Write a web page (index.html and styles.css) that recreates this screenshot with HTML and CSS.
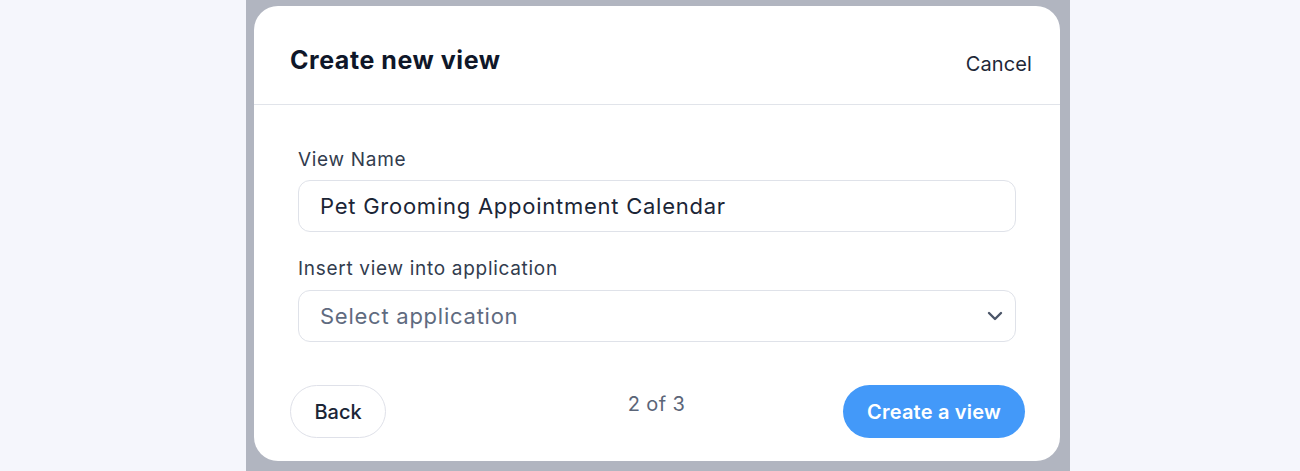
FILE: index.html
```html
<!DOCTYPE html>
<html>
<head>
<meta charset="utf-8">
<link rel="stylesheet" href="styles.css">
</head>
<body>
<div class="backdrop">
  <div class="modal">
    <div class="modal-header">
      <h1 class="title">Create new view</h1>
      <button class="cancel">Cancel</button>
    </div>
    <div class="modal-body">
      <label class="label">View Name</label>
      <div class="field">Pet Grooming Appointment Calendar</div>
      <label class="label label-second">Insert view into application</label>
      <div class="field select">
        <span class="placeholder">Select application</span>
        <svg class="chevron" width="16" height="10" viewBox="0 0 16 10"><path d="M2 2l6 6 6-6" fill="none" stroke="#4b5568" stroke-width="2.4" stroke-linecap="round" stroke-linejoin="round"/></svg>
      </div>
    </div>
    <div class="modal-footer">
      <button class="btn-back">Back</button>
      <span class="step">2 of 3</span>
      <button class="btn-create">Create a view</button>
    </div>
  </div>
</div>
</body>
</html>
```

FILE: styles.css
```css
* { box-sizing: border-box; }
html, body { margin: 0; height: 100%; }
body {
  background: #f5f6fc;
  font-family: Inter, "Noto Sans", sans-serif;
  display: flex;
}
.backdrop {
  margin-left: 246px;
  width: 824px;
  height: 471px;
  background: #b1b5c0;
  padding: 6px 10px 10px 8px;
}
.modal {
  background: #fff;
  border-radius: 24px;
  height: 455px;
  display: flex;
  flex-direction: column;
}
.modal-header {
  height: 99px;
  border-bottom: 1px solid #e1e4ea;
  display: flex;
  align-items: flex-start;
  justify-content: space-between;
  padding: 0 28px 0 36px;
}
.title {
  margin: 38px 0 0;
  font-size: 25px;
  font-weight: 700;
  letter-spacing: 0.55px;
  color: #0f1729;
  line-height: 32px;
}
.cancel {
  margin-top: 44px;
  background: none;
  border: 0;
  padding: 0;
  font-family: inherit;
  font-size: 20px;
  letter-spacing: 0.1px;
  color: #1e2838;
  line-height: 28px;
}
.modal-body {
  padding: 43px 44px 0 44px;
  display: flex;
  flex-direction: column;
}
.label {
  font-size: 19px;
  letter-spacing: 0.7px;
  line-height: 24px;
  color: #323c4e;
  margin-bottom: 8px;
}
.label-second { margin-top: 25px; margin-bottom: 9px; }
.field {
  height: 52px;
  border: 1px solid #dfe2e9;
  border-radius: 12px;
  padding: 0 21px;
  display: flex;
  align-items: center;
  font-size: 22px;
  letter-spacing: 0.75px;
  color: #1b2536;
}
.select { justify-content: space-between; padding-right: 12px; }
.placeholder { color: #5f6b80; }
.modal-footer {
  margin-top: 43px;
  padding: 0 35px 0 36px;
  display: flex;
  justify-content: space-between;
  align-items: flex-start;
}
.btn-back {
  width: 96px;
  height: 53px;
  border-radius: 27px;
  border: 1px solid #dfe1e9;
  background: #fff;
  font-family: inherit;
  font-size: 20px;
  font-weight: 500;
  color: #1b2536;
}
.step {
  margin-top: 5px;
  margin-left: 84px;
  font-size: 20px;
  letter-spacing: 0.35px;
  line-height: 28px;
  color: #5b6578;
}
.btn-create {
  width: 182px;
  height: 53px;
  border-radius: 27px;
  border: 0;
  background: #4399f9;
  color: #fff;
  font-family: inherit;
  font-size: 20px;
  font-weight: 600;
  letter-spacing: 0.2px;
}
```
